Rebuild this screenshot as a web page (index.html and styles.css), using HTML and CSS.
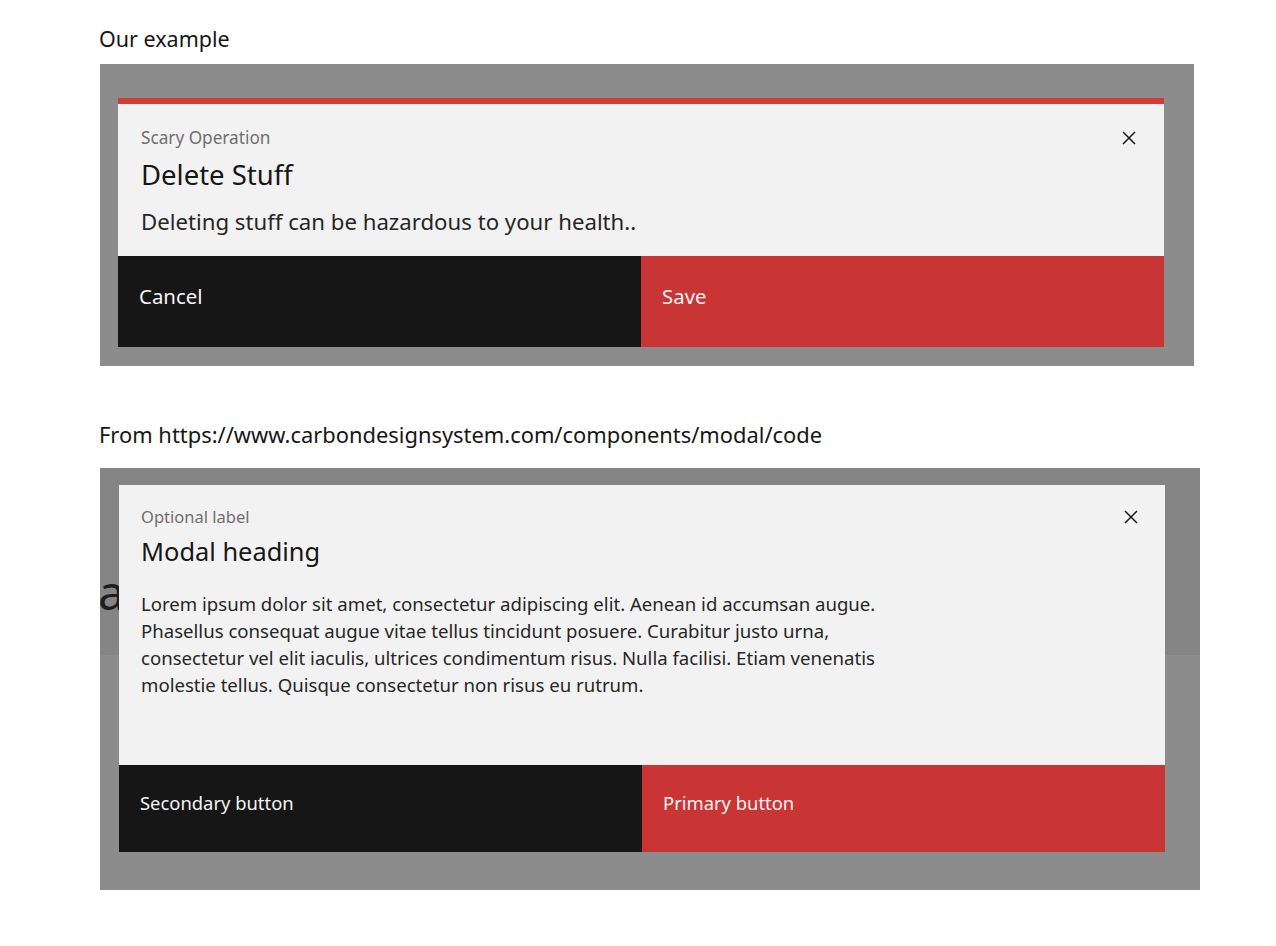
FILE: index.html
```html
<!DOCTYPE html>
<html>
<head>
<meta charset="utf-8">
<link rel="stylesheet" href="styles.css">
</head>
<body>
<div class="page">
  <h2 class="section-title first">Our example</h2>
  <div class="panel panel-one">
    <div class="modal modal-danger">
      <div class="modal-body">
        <div class="modal-header">
          <div class="modal-texts">
            <div class="modal-label">Scary Operation</div>
            <div class="modal-heading">Delete Stuff</div>
          </div>
          <button class="close-btn" aria-label="Close">
            <svg viewBox="0 0 16 16" width="16" height="16"><path d="M2 2 L14 14 M14 2 L2 14" stroke="#161616" stroke-width="1.5" fill="none"/></svg>
          </button>
        </div>
        <p class="modal-text">Deleting stuff can be hazardous to your health..</p>
      </div>
      <div class="modal-footer">
        <button class="btn btn-secondary">Cancel</button>
        <button class="btn btn-danger">Save</button>
      </div>
    </div>
  </div>

  <h2 class="section-title second">From https://www.carbondesignsystem.com/components/modal/code</h2>
  <div class="panel panel-two">
    <div class="backdrop"><span class="backdrop-text">a</span></div>
    <div class="modal modal-carbon">
      <div class="modal-body">
        <div class="modal-header">
          <div class="modal-texts">
            <div class="modal-label">Optional label</div>
            <div class="modal-heading">Modal heading</div>
          </div>
          <button class="close-btn" aria-label="Close">
            <svg viewBox="0 0 16 16" width="16" height="16"><path d="M2 2 L14 14 M14 2 L2 14" stroke="#161616" stroke-width="1.5" fill="none"/></svg>
          </button>
        </div>
        <p class="modal-text long">Lorem ipsum dolor sit amet, consectetur adipiscing elit. Aenean id accumsan augue. Phasellus consequat augue vitae tellus tincidunt posuere. Curabitur justo urna, consectetur vel elit iaculis, ultrices condimentum risus. Nulla facilisi. Etiam venenatis molestie tellus. Quisque consectetur non risus eu rutrum.</p>
      </div>
      <div class="modal-footer">
        <button class="btn btn-secondary">Secondary button</button>
        <button class="btn btn-danger">Primary button</button>
      </div>
    </div>
  </div>
</div>
</body>
</html>
```

FILE: styles.css
```css
* { box-sizing: border-box; }
html, body { margin: 0; padding: 0; background: #ffffff; }
body {
  font-family: "Noto Sans", "Liberation Sans", sans-serif;
  color: #161616;
}
.page {
  padding: 25px 0 0 99px;
}
.section-title {
  margin: 0;
  font-weight: 400;
  font-size: 21.5px;
  line-height: 28px;
  color: #161616;
}
.section-title.second { font-size: 21.9px; }
.section-title.first { margin-bottom: 11px; }
.section-title.second { margin-top: 55px; margin-bottom: 19px; }

.panel {
  background: #8c8c8c;
  margin-left: 1px;
}
.panel-one {
  width: 1094px;
  padding: 34px 30px 19px 18px;
}
.panel-two {
  width: 1100px;
  padding: 17px 35px 38px 19px;
  display: grid;
  grid-template-columns: 1fr;
  overflow: hidden;
}
.backdrop {
  grid-area: 1 / 1;
  margin: -17px -35px 0 -19px;
  height: 187px;
  background: #858585;
  position: relative;
}
.backdrop-text {
  position: absolute;
  left: -2px;
  top: 94px;
  font-size: 48px;
  line-height: 60px;
  color: #1e1e1e;
}
.modal-carbon { grid-area: 1 / 1; position: relative; }

.modal { background: #f2f2f2; }
.modal-danger { border-top: 6px solid #d53a35; }

.modal-header {
  display: flex;
  justify-content: space-between;
  align-items: flex-start;
}
.modal-label {
  line-height: 20px;
  color: #6f6f6f;
}
.modal-heading {
  line-height: 36px;
  color: #161616;
}
.close-btn {
  border: 0;
  background: transparent;
  padding: 0;
  width: 16px;
  height: 16px;
  display: block;
  cursor: pointer;
}
.modal-text {
  margin: 0;
  color: #262626;
}

.modal-danger .modal-body { padding: 24px 27px 20px 23px; }
.modal-danger .modal-label { font-size: 17.2px; }
.modal-danger .modal-heading { margin-top: 9px; font-size: 27.5px; }
.modal-danger .close-btn { margin-top: 2px; }
.modal-danger .modal-text { font-size: 22.2px; line-height: 28px; margin-top: 15px; }

.modal-carbon .modal-body { padding: 22px 26px 67px 22px; }
.modal-carbon .modal-label { font-size: 16.5px; }
.modal-carbon .modal-heading { margin-top: 6px; font-size: 25.4px; }
.modal-carbon .close-btn { margin-top: 2px; }
.modal-carbon .modal-text {
  font-size: 18.6px;
  line-height: 27px;
  margin-top: 21px;
  max-width: 760px;
}

.modal-footer {
  display: grid;
  grid-template-columns: 1fr 1fr;
}
.btn {
  border: 0;
  margin: 0;
  font-family: inherit;
  text-align: left;
  color: #f4f4f4;
  display: flex;
  align-items: flex-start;
  cursor: pointer;
}
.btn-secondary { background: #161616; }
.btn-danger { background: #c93534; }
.modal-danger .btn {
  height: 91px;
  padding: 28px 21px;
  font-size: 20.4px;
  line-height: 24px;
}
.modal-carbon .btn {
  height: 87px;
  padding: 26px 21px;
  font-size: 18.4px;
  line-height: 24px;
}
```
